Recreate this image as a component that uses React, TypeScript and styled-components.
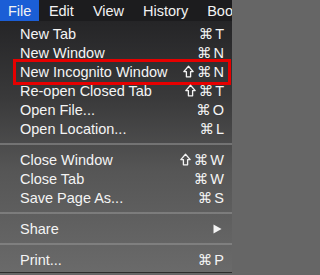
import styled, { createGlobalStyle } from "styled-components";

const GlobalStyle = createGlobalStyle`
  html, body {
    margin: 0;
    padding: 0;
    background: #666;
  }
  body {
    font-family: "Liberation Sans", Arial, sans-serif;
  }
`;

/* menu bar across the top */

const Screen = styled.div`
  width: 232px;
  height: 275px;
  overflow: hidden;
  display: flex;
  flex-direction: column;
`;

const MenuBar = styled.div`
  height: 21px;
  display: flex;
  align-items: center;
  background: #1c1c1e;
  flex-shrink: 0;
  overflow: hidden;
`;

const BarItem = styled.div<{ $active?: boolean }>`
  height: 100%;
  display: flex;
  align-items: center;
  padding: 0 ${({ $active }) => ($active ? "8px" : "9.5px")};
  font-size: 14.5px;
  color: #f2f2f2;
  background: ${({ $active }) => ($active ? "#1b5ed6" : "transparent")};
  white-space: nowrap;
  flex-shrink: 0;
`;

/* dropdown */

const Dropdown = styled.div`
  display: flex;
  flex-direction: column;
  padding: 3px 0 3px;
  background: linear-gradient(180deg, #252527 0%, #39393a 30%, #565656 60%, #6a6a6a 100%);
  border-bottom: 1px solid #2b2b2b;
`;

const Row = styled.div<{ $marked?: boolean }>`
  position: relative;
  height: 19px;
  display: flex;
  align-items: center;
  justify-content: space-between;
  padding: 0 8px 0 20px;
  font-size: 14.5px;
  color: #f4f4f4;

  ${({ $marked }) =>
    $marked &&
    `
    &::after {
      content: "";
      position: absolute;
      top: -3px;
      bottom: -4px;
      left: 13px;
      right: 1px;
      border: 3px solid #e60000;
      pointer-events: none;
    }
  `}
`;

const Label = styled.span`
  white-space: nowrap;
`;

const Keys = styled.span`
  display: inline-flex;
  align-items: center;
  gap: 2px;
  font-size: 14px;
  white-space: nowrap;
`;

const Cmd = styled.span`
  font-family: "DejaVu Sans", sans-serif;
  font-size: 14.5px;
`;

const KeyLetter = styled.span`
  font-family: "Liberation Sans", Arial, sans-serif;
  font-size: 14.5px;
`;

const ShiftIcon = styled.svg`
  width: 11px;
  height: 13px;
  margin-right: 1px;
`;

const Arrow = styled.svg`
  width: 9px;
  height: 10px;
  margin-right: 2px;
`;

const Separator = styled.div`
  height: 12px;
  display: flex;
  align-items: center;

  &::before {
    content: "";
    flex: 1;
    height: 2px;
    background: rgba(150, 150, 150, 0.55);
  }
`;

type Item =
  | { kind: "item"; label: string; key?: string; shift?: boolean; marked?: boolean; submenu?: boolean }
  | { kind: "sep" };

const items: Item[] = [
  { kind: "item", label: "New Tab", key: "T" },
  { kind: "item", label: "New Window", key: "N" },
  { kind: "item", label: "New Incognito Window", key: "N", shift: true, marked: true },
  { kind: "item", label: "Re-open Closed Tab", key: "T", shift: true },
  { kind: "item", label: "Open File...", key: "O" },
  { kind: "item", label: "Open Location...", key: "L" },
  { kind: "sep" },
  { kind: "item", label: "Close Window", key: "W", shift: true },
  { kind: "item", label: "Close Tab", key: "W" },
  { kind: "item", label: "Save Page As...", key: "S" },
  { kind: "sep" },
  { kind: "item", label: "Share", submenu: true },
  { kind: "sep" },
  { kind: "item", label: "Print...", key: "P" },
];

function Shift() {
  return (
    <ShiftIcon viewBox="0 0 11 13" fill="none" stroke="#f4f4f4" strokeWidth="1.3" strokeLinejoin="round">
      <path d="M5.5 1.3 L10.2 6.6 H7.6 V11.8 H3.4 V6.6 H0.8 Z" />
    </ShiftIcon>
  );
}

export default function App() {
  return (
    <>
      <GlobalStyle />
      <Screen>
        <MenuBar>
          <BarItem $active>File</BarItem>
          <BarItem>Edit</BarItem>
          <BarItem>View</BarItem>
          <BarItem>History</BarItem>
          <BarItem>Boo</BarItem>
        </MenuBar>
        <Dropdown>
          {items.map((it, i) =>
            it.kind === "sep" ? (
              <Separator key={i} />
            ) : (
              <Row key={i} $marked={it.marked}>
                <Label>{it.label}</Label>
                {it.submenu ? (
                  <Arrow viewBox="0 0 9 10">
                    <path d="M0.5 0.5 L8.5 5 L0.5 9.5 Z" fill="#f4f4f4" />
                  </Arrow>
                ) : (
                  <Keys>
                    {it.shift && <Shift />}
                    <Cmd>⌘</Cmd>
                    <KeyLetter>{it.key}</KeyLetter>
                  </Keys>
                )}
              </Row>
            )
          )}
        </Dropdown>
      </Screen>
    </>
  );
}
